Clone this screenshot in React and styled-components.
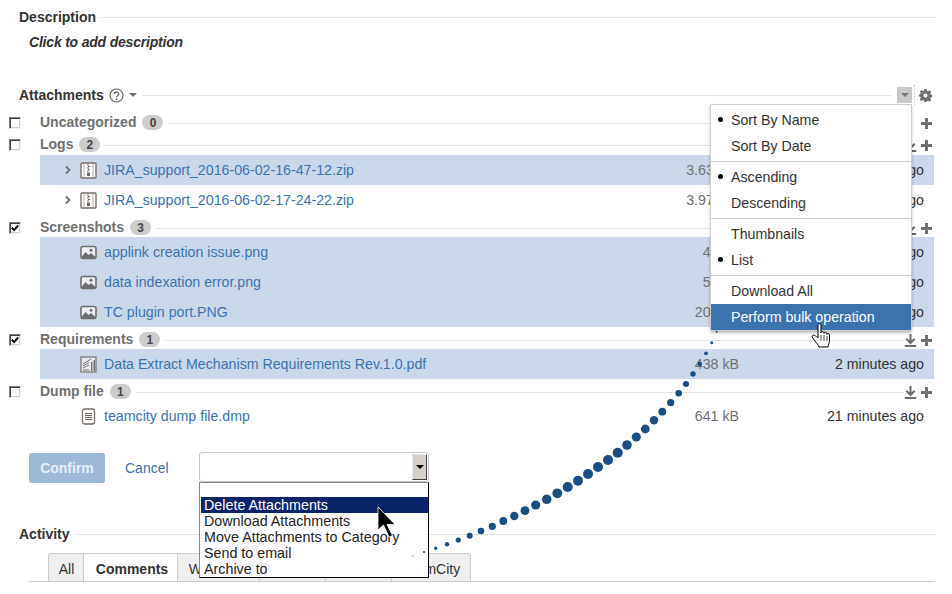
import React from "react";
import styled, { createGlobalStyle } from "styled-components";

const Global = createGlobalStyle`
  html, body { margin: 0; padding: 0; background: #fff; }
  body { font-family: "Liberation Sans", Arial, sans-serif; font-size: 14.2px; color: #333; }
`;

const Page = styled.div`
  position: relative;
  width: 952px;
  height: 594px;
  overflow: hidden;
  padding: 7px 17px 0 0;
  box-sizing: border-box;
`;

const SectionHead = styled.div`
  display: flex;
  align-items: center;
  height: 20px;
  margin-left: 19px;
  margin-top: ${(p) => p.$top || 0}px;
  gap: 5px;
  font-weight: bold;
  font-size: 14px;
  color: #333;
`;

const Rule = styled.div`
  flex: 1;
  height: 1px;
  background: #e3e3e3;
  margin-left: ${(p) => p.$left || 0}px;
  margin-top: ${(p) => p.$down || 0}px;
`;

const Placeholder = styled.div`
  margin: 6px 0 0 29px;
  height: 18px;
  line-height: 18px;
  font-style: italic;
  font-weight: bold;
  font-size: 14px;
  letter-spacing: -0.2px;
  color: #333;
`;

const HelpIcon = styled.svg`
  width: 15px;
  height: 15px;
  flex: none;
`;

const Caret = styled.span`
  width: 0;
  height: 0;
  border-left: 4px solid transparent;
  border-right: 4px solid transparent;
  border-top: 4px solid ${(p) => p.$color || "#707070"};
  flex: none;
`;

const HeadTools = styled.span`
  display: flex;
  align-items: center;
  flex: none;
  margin-right: 3px;
`;

const MenuButton = styled.span`
  width: 15px;
  height: 16px;
  background: #c9c9c9;
  display: flex;
  align-items: center;
  justify-content: center;
  flex: none;
`;

const DottedDivider = styled.span`
  width: 0;
  height: 20px;
  border-left: 1px dotted #c4c4c4;
  margin: 0 4px 0 2px;
  flex: none;
`;

const GearWrap = styled.span`
  display: flex;
  flex: none;
`;

const ToolSlot = styled.span`
  display: flex;
  align-items: center;
  gap: 4px;
  flex: none;
  margin: 3px 3px 0 0;
`;

const Category = styled.div`
  display: flex;
  align-items: center;
  height: 22px;
  box-sizing: border-box;
  padding-top: ${(p) => (p.$after ? 2 : 0)}px;
  margin-top: ${(p) => p.$top || 0}px;
`;

const CheckSlot = styled.span`
  width: 40px;
  padding: 2px 0 0 9px;
  box-sizing: border-box;
  flex: none;
  display: flex;
`;

const Checkbox = styled.span`
  width: 12px;
  height: 12px;
  box-sizing: border-box;
  border: 1px solid #f4f3f0;
  border-top-color: #808080;
  border-left-color: #808080;
  background: #fff;
  display: block;
  position: relative;
  box-shadow: inset 1px 1px 0 #404040, inset -1px -1px 0 #d4d0c8;
`;

const CheckMark = styled.svg`
  position: absolute;
  left: 1px;
  top: 1px;
  width: 8px;
  height: 8px;
`;

const CategoryName = styled.span`
  font-weight: bold;
  font-size: 14px;
  color: #707070;
  white-space: nowrap;
`;

const Badge = styled.span`
  margin-left: 6px;
  min-width: 21px;
  height: 15px;
  box-sizing: border-box;
  border-radius: 8px;
  background: #cccccc;
  color: #444;
  font-weight: bold;
  font-size: 12px;
  line-height: 16px;
  text-align: center;
  flex: none;
`;

const Row = styled.div`
  display: flex;
  align-items: center;
  height: 30px;
  margin: 0 1px 0 40px;
  background: ${(p) => (p.$selected ? "#cbd8ea" : "transparent")};
`;

const Chevron = styled.svg`
  width: 8px;
  height: 10px;
  margin-left: 24px;
  flex: none;
`;

const NoChevron = styled.span`
  width: 32px;
  flex: none;
`;

const FileIcon = styled.svg`
  width: 17px;
  height: 17px;
  margin-left: 8px;
  flex: none;
`;

const FileLink = styled.a`
  margin-left: 7px;
  color: #3b73af;
  white-space: nowrap;
  flex: none;
  width: 520px;
`;

const Size = styled.span`
  color: #707070;
  flex: 1;
  text-align: right;
  white-space: nowrap;
`;

const Age = styled.span`
  color: #333;
  width: 185px;
  margin-right: 10px;
  text-align: right;
  white-space: nowrap;
  flex: none;
`;

const FormRow = styled.div`
  display: flex;
  align-items: flex-start;
  margin: 21px 0 0 29px;
  height: 31px;
`;

const ConfirmButton = styled.span`
  width: 76px;
  height: 30px;
  margin-top: 1px;
  border-radius: 3px;
  background: #9db9d7;
  color: #e9eff6;
  font-weight: bold;
  font-size: 14px;
  text-align: center;
  line-height: 30px;
  flex: none;
`;

const CancelLink = styled.a`
  margin-left: 20px;
  width: 74px;
  line-height: 32px;
  font-size: 14px;
  color: #3b73af;
  flex: none;
`;

const SelectBox = styled.div`
  width: 230px;
  height: 30px;
  box-sizing: border-box;
  border: 1px solid #c8c8c8;
  border-radius: 3px;
  background: #fff;
  display: flex;
  justify-content: flex-end;
  padding: 1px;
  flex: none;
`;

const SelectButton = styled.span`
  width: 15px;
  box-sizing: border-box;
  background: #d4d0c8;
  border: 1px solid;
  border-color: #e8e6e1 #404040 #404040 #e8e6e1;
  display: flex;
  align-items: center;
  justify-content: center;
`;

const SelectList = styled.ul`
  position: absolute;
  left: 199px;
  top: 482px;
  width: 230px;
  height: 96px;
  box-sizing: border-box;
  margin: 0;
  padding: 14px 0 0 1px;
  list-style: none;
  background: #fff;
  border: 1px solid #000;
  border-top-color: #888;
  border-left-color: #888;
  font-size: 14.3px;
  color: #222;
`;

const SelectOption = styled.li`
  height: 16px;
  line-height: 16px;
  padding-left: 3px;
  white-space: nowrap;
  background: ${(p) => (p.$active ? "#0a246a" : "transparent")};
  color: ${(p) => (p.$active ? "#fff" : "#222")};
`;

const Tabs = styled.div`
  display: flex;
  margin: 9px 0 0 29px;
  height: 28px;
  padding-left: 19px;
  border-bottom: 1px solid #ccc;
`;

const Tab = styled.span`
  height: 28px;
  box-sizing: border-box;
  width: ${(p) => p.$w}px;
  padding-left: ${(p) => (p.$active ? 3 : p.$first ? 1 : 0)}px;
  line-height: 30px;
  text-align: center;
  font-size: 14px;
  white-space: nowrap;
  overflow: hidden;
  border: 1px solid #ccc;
  border-left-width: ${(p) => (p.$first ? 1 : 0)}px;
  border-bottom: ${(p) => (p.$active ? "1px solid #fff" : "0")};
  background: ${(p) => (p.$active ? "#fff" : "#efefef")};
  font-weight: ${(p) => (p.$active ? "bold" : "normal")};
  color: #333;
  border-radius: ${(p) => (p.$first ? "3px 0 0 0" : p.$last ? "0 3px 0 0" : "0")};
`;

const Menu = styled.div`
  position: absolute;
  left: 710px;
  top: 104px;
  width: 200px;
  background: #fff;
  border: 1px solid #ccc;
  box-shadow: 0 2px 3px rgba(0, 0, 0, 0.25);
  border-radius: 0 0 3px 3px;
  color: #333;
`;

const MenuGroup = styled.div`
  padding: ${(p) => (p.$last ? "2px 0 0" : "2px 0")};
  border-top: ${(p) => (p.$first ? "0" : "1px solid #ccc")};
`;

const MenuItem = styled.div`
  height: 26px;
  line-height: 26px;
  padding-left: 20px;
  position: relative;
  white-space: nowrap;
  background: ${(p) => (p.$hover ? "#3b73af" : "transparent")};
  color: ${(p) => (p.$hover ? "#fff" : "#333")};
`;

const Bullet = styled.span`
  position: absolute;
  left: 7px;
  top: 10px;
  width: 5px;
  height: 5px;
  border-radius: 50%;
  background: #000;
`;

const Overlay = styled.svg`
  position: absolute;
  left: 0;
  top: 0;
  width: 952px;
  height: 594px;
  pointer-events: none;
`;

const dots = [
  [412.7, 556, 0.6], [424, 552, 1.1], [435.7, 548.3, 1.7], [447, 544.3, 2.2], [458.3, 540, 2.6],
  [469.7, 535.7, 3], [481, 531, 3.3], [492.3, 526.3, 3.6], [503.3, 521, 3.9], [514.3, 516, 4.2],
  [525, 510.7, 4.4], [535.7, 505, 4.6], [546.7, 499.3, 4.8], [557.3, 493.3, 4.9], [567.7, 487, 5],
  [578, 480.7, 5], [588, 474, 5], [598, 467, 5], [608, 460, 5], [617.7, 452.7, 5],
  [627, 445, 4.8], [636.3, 437, 4.6], [645.3, 429, 4.4], [654, 420.3, 4.2], [662.3, 411.7, 3.9],
  [670.7, 402.7, 3.6], [678.7, 393.3, 3.3], [686, 384, 3], [693, 374, 2.7], [699.7, 364, 2.3],
  [706, 353.3, 1.9], [711.7, 342.7, 1.5], [716.7, 331.7, 1], [721.3, 320, 0.4],
];

const Plus = () => (
  <svg width="11" height="11" viewBox="0 0 11 11">
    <path d="M4 0h3v4h4v3H7v4H4V7H0V4h4z" fill="#707070" />
  </svg>
);

const Download = () => (
  <svg width="13" height="13" viewBox="0 0 13 13">
    <path d="M6.5 0v8.500M2.300 4.800l4.200 4.200 4.200-4.200M.8 12h11.400" fill="none" stroke="#6a6a6a" strokeWidth="2" />
  </svg>
);

const Gear = () => (
  <svg width="13" height="13" viewBox="0 0 13 13">
    <path
      fillRule="evenodd"
      fill="#707070"
      d="M5.300 0h2.400l.3 1.800 1.100.5L10.600 1.200l1.700 1.700-1.100 1.500.5 1.100 1.800.3v2.400l-1.800.3-.5 1.100 1.100 1.500-1.700 1.700-1.500-1.100-1.100.5-.3 1.800H5.300L5 11.500l-1.100-.5-1.500 1.100L.7 10.400l1.100-1.500-.5-1.100L-.5 7.500V5.500l1.800-.3.5-1.100L.7 2.600 2.400.9l1.500 1.100L5 1.500zM6.500 4.400a2.100 2.100 0 1 0 0 4.200 2.100 2.100 0 0 0 0-4.200z"
    />
  </svg>
);

const Tools = ({ noDownload }) => (
  <ToolSlot>
    {noDownload ? <span style={{ width: 13 }} /> : <Download />}
    <Plus />
  </ToolSlot>
);

const ZipIcon = () => (
  <FileIcon viewBox="0 0 17 17">
    <rect x="1" y="1" width="15" height="15" rx="1" fill="#fff" stroke="#7a7065" strokeWidth="1.400" />
    <path d="M4 2v13M13 2v13" stroke="#b9b4ad" strokeWidth="1" />
    <path d="M7 2.500h2v1H7zM8 4h2v1H8zM7 5.500h2v1H7zM8 7h2v1H8zM7 8.500h2v1H7z" fill="#6b6b6b" />
    <rect x="7" y="10.500" width="3" height="3.600" fill="#6b6b6b" />
  </FileIcon>
);

const ImageIcon = () => (
  <FileIcon viewBox="0 0 17 17">
    <rect x="1" y="2.500" width="15" height="12" rx="2" fill="#eef0f3" stroke="#6e6e6e" strokeWidth="1.600" />
    <path d="M1.500 13l4-5 3 3 2.500-2 4.500 4v1.500H1.500z" fill="#6e6e6e" />
    <circle cx="11" cy="6.200" r="1.500" fill="#6e6e6e" />
  </FileIcon>
);

const PdfIcon = () => (
  <FileIcon viewBox="0 0 17 17">
    <rect x="1" y="1" width="15" height="15" fill="#e6ebf3" stroke="#77706a" strokeWidth="1.200" />
    <path d="M3 12l6-3M3 14h6M3 10l6-3.500M3 8l8-5" stroke="#77706a" strokeWidth="1" fill="none" />
    <path d="M11 6h1.400v9H11zM13.500 4H15v11h-1.500z" fill="#77706a" />
  </FileIcon>
);

const DocIcon = () => (
  <FileIcon viewBox="0 0 17 17">
    <rect x="2.500" y="1" width="12" height="15" rx="2" fill="#fff" stroke="#7b6f66" strokeWidth="1.300" />
    <path d="M5 5.500h7M5 7.500h7M5 9.500h7M5 11.500h7" stroke="#666" strokeWidth="1" />
  </FileIcon>
);

const ChevronIcon = () => (
  <Chevron viewBox="0 0 8 10">
    <path d="M2 1.500l3.500 3.500L2 8.500" fill="none" stroke="#707070" strokeWidth="1.800" />
  </Chevron>
);

const CategoryRow = ({ name, count, checked, top, after, noDownload }) => (
  <Category $top={top} $after={after}>
    <CheckSlot>
      <Checkbox>
        {checked && (
          <CheckMark viewBox="0 0 8 8">
            <path d="M.8 3.800l2.300 2.300 4.200-4.700" fill="none" stroke="#000" strokeWidth="2" />
          </CheckMark>
        )}
      </Checkbox>
    </CheckSlot>
    <CategoryName>{name}</CategoryName>
    <Badge>{count}</Badge>
    <Rule $left={5} $down={2} />
    <Tools noDownload={noDownload} />
  </Category>
);

const FileRow = ({ icon, name, size, age, selected, chevron }) => (
  <Row $selected={selected}>
    {chevron ? <ChevronIcon /> : <NoChevron />}
    {icon}
    <FileLink>{name}</FileLink>
    <Size>{size}</Size>
    <Age>{age}</Age>
  </Row>
);

export default function App() {
  return (
    <Page>
      <Global />
      <SectionHead>
        Description
        <Rule />
      </SectionHead>
      <Placeholder>Click to add description</Placeholder>

      <SectionHead $top={34}>
        Attachments
        <HelpIcon viewBox="0 0 15 15">
          <circle cx="7.500" cy="7.500" r="6.500" fill="none" stroke="#666" strokeWidth="1.200" />
          <path d="M5.300 6a2.200 2 0 1 1 3.300 1.700c-.8.500-1.100.8-1.100 1.600" fill="none" stroke="#666" strokeWidth="1.300" />
          <circle cx="7.500" cy="11.200" r=".9" fill="#666" />
        </HelpIcon>
        <Caret />
        <Rule />
        <HeadTools>
          <MenuButton><Caret $color="#777" /></MenuButton>
          <DottedDivider />
          <GearWrap><Gear /></GearWrap>
        </HeadTools>
      </SectionHead>

      <CategoryRow name="Uncategorized" count="0" top={6} noDownload />
      <CategoryRow name="Logs" count="2" />
      <FileRow selected chevron icon={<ZipIcon />} name="JIRA_support_2016-06-02-16-47-12.zip" size="3.63 MB" age="3 minutes ago" />
      <FileRow chevron icon={<ZipIcon />} name="JIRA_support_2016-06-02-17-24-22.zip" size="3.97 MB" age="3 minutes ago" />
      <CategoryRow name="Screenshots" count="3" checked after />
      <FileRow selected icon={<ImageIcon />} name="applink creation issue.png" size="47 kB" age="2 minutes ago" />
      <FileRow selected icon={<ImageIcon />} name="data indexation error.png" size="53 kB" age="2 minutes ago" />
      <FileRow selected icon={<ImageIcon />} name="TC plugin port.PNG" size="205 kB" age="2 minutes ago" />
      <CategoryRow name="Requirements" count="1" checked after />
      <FileRow selected icon={<PdfIcon />} name="Data Extract Mechanism Requirements Rev.1.0.pdf" size="438 kB" age="2 minutes ago" />
      <CategoryRow name="Dump file" count="1" after />
      <FileRow icon={<DocIcon />} name="teamcity dump file.dmp" size="641 kB" age="21 minutes ago" />

      <FormRow>
        <ConfirmButton>Confirm</ConfirmButton>
        <CancelLink>Cancel</CancelLink>
        <SelectBox>
          <SelectButton><Caret $color="#000" /></SelectButton>
        </SelectBox>
      </FormRow>

      <SectionHead $top={41}>
        Activity
        <Rule />
      </SectionHead>
      <Tabs>
        <Tab $first $w={36}>All</Tab>
        <Tab $active $w={94}>Comments</Tab>
        <Tab $w={82}>Work Log</Tab>
        <Tab $w={66}>History</Tab>
        <Tab $w={66}>Activity</Tab>
        <Tab $w={79} $last>TeamCity</Tab>
      </Tabs>

      <SelectList>
        <SelectOption $active>Delete Attachments</SelectOption>
        <SelectOption>Download Attachments</SelectOption>
        <SelectOption>Move Attachments to Category</SelectOption>
        <SelectOption>Send to email</SelectOption>
        <SelectOption>Archive to</SelectOption>
      </SelectList>

      <Menu>
        <MenuGroup $first>
          <MenuItem><Bullet />Sort By Name</MenuItem>
          <MenuItem>Sort By Date</MenuItem>
        </MenuGroup>
        <MenuGroup>
          <MenuItem><Bullet />Ascending</MenuItem>
          <MenuItem>Descending</MenuItem>
        </MenuGroup>
        <MenuGroup>
          <MenuItem>Thumbnails</MenuItem>
          <MenuItem><Bullet />List</MenuItem>
        </MenuGroup>
        <MenuGroup $last>
          <MenuItem>Download All</MenuItem>
          <MenuItem $hover>Perform bulk operation</MenuItem>
        </MenuGroup>
      </Menu>

      <Overlay viewBox="0 0 952 594">
        {dots.map(([x, y, r]) => (
          <circle key={x} cx={x} cy={y} r={r} fill="#1a4f85" />
        ))}
        <path d="M378 507V530L383.500 525L389 537L392.500 535.500L387 524.500H395Z" fill="#000" stroke="#fff" strokeWidth="0.800" />
        <path
          d="M818 336V325.500c0-2.500 3-2.500 3 0V333c0-2 3-2 3 0v.5c0-2 3-1.500 3 .5v.5c0-1.500 2.500-1.300 2.500.5v5.500c0 2.500-1.200 4-1.500 6.500H819c-.5-2-2.500-4-4-6-1.500-2-3.500-4-2.500-5.500 1-1.300 3.500.5 5.500 2.500z"
          fill="#fff"
          stroke="#000"
          strokeWidth="1"
        />
        <path d="M821 335v6M824 335v6M827 336v5" stroke="#000" strokeWidth=".7" />
      </Overlay>
    </Page>
  );
}
